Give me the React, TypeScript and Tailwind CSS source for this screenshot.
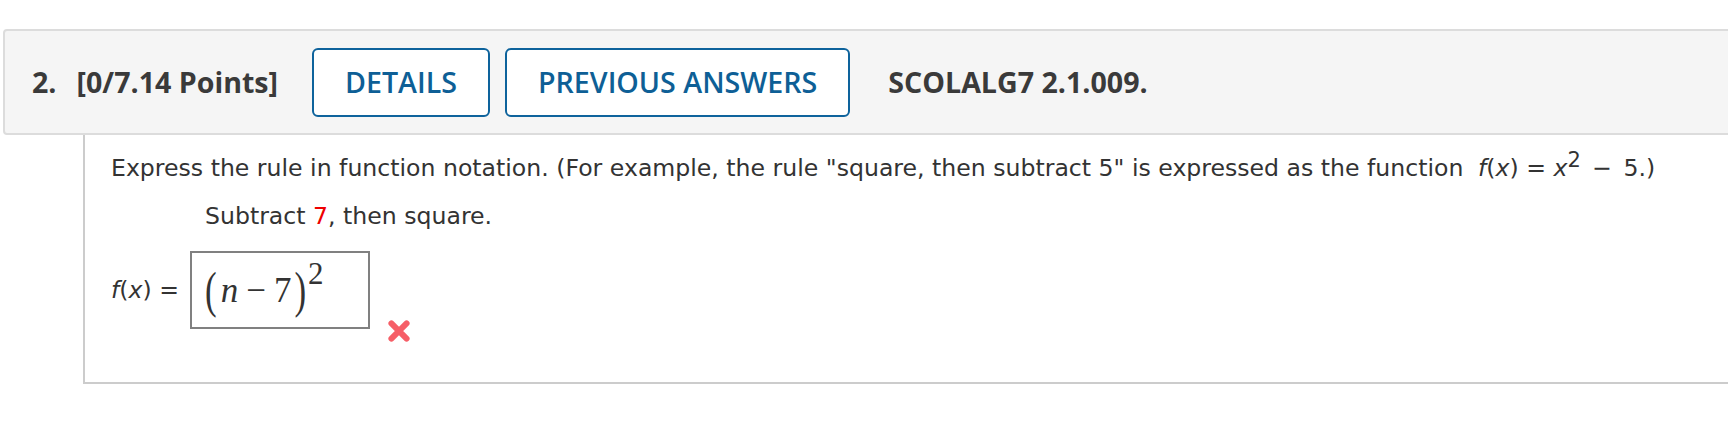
import React from "react";

function WrongMark() {
  return (
    <svg viewBox="0 0 24 24" className="h-[26px] w-[26px]" aria-hidden>
      <path
        d="M5 5 L19 19 M19 5 L5 19"
        stroke="#f5434d"
        strokeWidth="5.5"
        strokeLinecap="round"
        opacity="0.85"
      />
    </svg>
  );
}

function HeaderButton({ children }: { children: React.ReactNode }) {
  return (
    <button className="flex h-[69px] items-center rounded-[6px] border-2 border-[#0e639c] bg-white px-[31px] text-[28.6px] font-semibold text-[#0e5f96]">
      {children}
    </button>
  );
}

export default function App() {
  return (
    <div className="min-h-screen overflow-hidden bg-white pt-[29px] text-[#333]">
      <div className="ml-[3px] mr-[-10px] flex h-[106px] items-center rounded-[4px] border-2 border-[#dcdcdc] bg-[#f5f5f5] pl-[27px] font-['Open_Sans',sans-serif] text-[28.6px] font-bold text-[#3a3a3a]">
        <span>2.</span>
        <span className="ml-[20px]">[0/7.14 Points]</span>
        <div className="ml-[34px] flex gap-[15px]">
          <HeaderButton>DETAILS</HeaderButton>
          <HeaderButton>PREVIOUS ANSWERS</HeaderButton>
        </div>
        <span className="ml-[38px]">SCOLALG7 2.1.009.</span>
      </div>

      <div className="ml-[83px] border-b-2 border-l-2 border-[#cccccc] pb-[38px] pl-[26px] pt-[19px] font-['DejaVu_Sans',Verdana,sans-serif] text-[23.6px] leading-[28px]">
        <p>
          Express the rule in function notation. (For example, the rule
          "square, then subtract 5" is expressed as the function{" "}
          <span className="ml-[7px] italic">f</span>(<span className="italic">x</span>) = <span className="italic">x</span>
          <sup className="top-[-9px] text-[21px]">2</sup>
          <span className="mx-[4px]"> − </span>5.)
        </p>
        <p className="ml-[94px] mt-[20px]">
          Subtract <span className="text-[#ee0000]">7</span>, then square.
        </p>
        <div className="mt-[21px] flex items-start">
          <div className="flex h-[78px] items-center">
            <span className="italic">f</span>(<span className="italic">x</span>)&nbsp;=
          </div>
          <div className="ml-[11px] flex h-[78px] w-[180px] items-center border-2 border-[#808080] bg-white pl-[13px] font-['Liberation_Serif','Times_New_Roman',serif] text-[35px] leading-none text-[#333]">
            <span className="inline-block origin-center scale-y-[1.45]">(</span>
            <span className="ml-[4px] italic">n</span>
            <span className="mx-[8px]">−</span>
            <span>7</span>
            <span className="ml-[3px] inline-block origin-center scale-y-[1.45]">)</span>
            <span className="relative top-[-17px] ml-[2px] text-[31px]">2</span>
          </div>
          <div className="ml-[16px] mt-[67px]">
            <WrongMark />
          </div>
        </div>
      </div>
    </div>
  );
}
